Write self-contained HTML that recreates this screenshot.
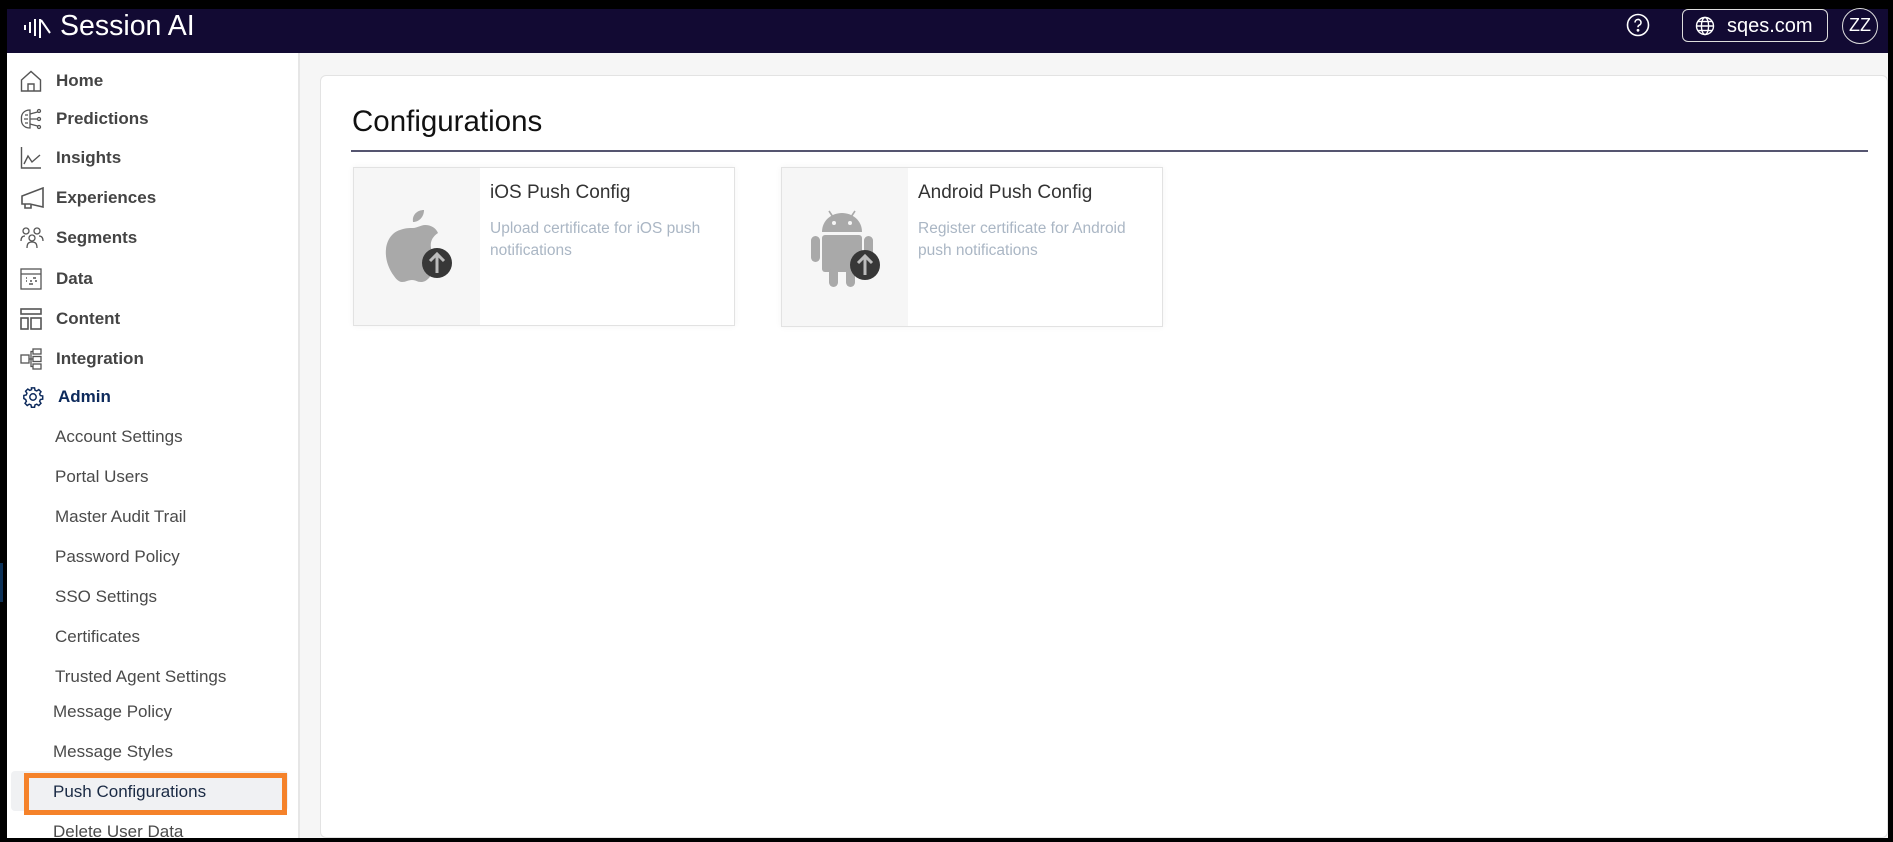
<!DOCTYPE html>
<html><head><meta charset="utf-8"><style>
*{margin:0;padding:0;box-sizing:border-box}
body{width:1893px;height:842px;overflow:hidden;background:#000;font-family:"Liberation Sans",Arial,sans-serif;position:relative}
.abs{position:absolute}
#hdr{left:7px;top:9px;width:1881px;height:44px;background:#120a33}
#side{left:7px;top:53px;width:293px;height:785px;background:#fff;border-right:2px solid #e6e6e6}
#main{left:300px;top:53px;width:1588px;height:785px;background:#f6f6f6}
#card{left:320px;top:75px;width:1568px;height:763px;background:#fff;border:1px solid #e3e3e3;border-radius:6px}
.nav{position:absolute;left:56px;font-size:17px;font-weight:bold;color:#444;line-height:20px}
.ico{position:absolute;left:20px}
.sub{position:absolute;left:55px;font-size:17px;color:#4a4a4a;line-height:20px}
.cfg{position:absolute;background:#fff;border:1px solid #e2e2e2;box-shadow:0 0 6px rgba(0,0,0,.05)}
.cfg .g{position:absolute;left:0;top:0;bottom:0;width:126px;background:#f6f6f6}
.cfg h3{position:absolute;left:136px;top:14px;font-size:19px;font-weight:normal;color:#333}
.cfg p{position:absolute;left:136px;top:50px;width:230px;font-size:15.5px;line-height:22px;color:#aab6c4}
</style></head><body>
<div id="hdr" class="abs"></div>
<svg class="abs" style="left:22px;top:16px" width="32" height="24" viewBox="0 0 32 24" fill="none" stroke="#fff" stroke-width="2"><line x1="3" y1="9" x2="3" y2="14"/><line x1="8" y1="6" x2="8" y2="17"/><line x1="13" y1="3" x2="13" y2="20"/><line x1="18" y1="3" x2="18" y2="22"/><path d="M19 4 L28 17"/></svg>
<div class="abs" style="left:60px;top:9px;font-size:28.5px;color:#fff;line-height:34px">Session AI</div>
<svg class="abs" style="left:1626px;top:13px" width="24" height="24" viewBox="0 0 24 24" fill="none" stroke="#fff" stroke-width="1.6"><circle cx="12" cy="12" r="10.5"/><path d="M9 9.5a3 3 0 1 1 4 2.8c-.8.4-1 1-1 2"/><circle cx="12" cy="17.3" r=".6" fill="#fff"/></svg>
<div class="abs" style="left:1682px;top:9px;width:146px;height:33px;border:1.5px solid #ddd;border-radius:6px"></div>
<svg class="abs" style="left:1695px;top:16px" width="20" height="20" viewBox="0 0 20 20" fill="none" stroke="#fff" stroke-width="1.4"><circle cx="10" cy="10" r="8.5"/><ellipse cx="10" cy="10" rx="3.6" ry="8.5"/><line x1="1.5" y1="10" x2="18.5" y2="10"/><line x1="3" y1="5.5" x2="17" y2="5.5"/><line x1="3" y1="14.5" x2="17" y2="14.5"/></svg>
<div class="abs" style="left:1727px;top:14px;font-size:20px;color:#fff;line-height:24px">sqes.com</div>
<div class="abs" style="left:1842px;top:8px;width:36px;height:36px;border:1.5px solid #ddd;border-radius:50%;color:#fff;font-size:18px;text-align:center;line-height:33px">ZZ</div>

<div id="side" class="abs"></div>
<div class="abs" style="left:0;top:563px;width:3px;height:39px;background:#0c3158"></div>
<div id="main" class="abs"></div>
<div id="card" class="abs"></div>

<svg class="ico" style="top:70px" width="22" height="22" viewBox="0 0 22 22" fill="none" stroke="#555" stroke-width="1.4"><path d="M1.5 10 L11 1.5 L20.5 10 V21 H1.5Z"/><path d="M8 21 V14 H14 V21"/></svg>
<div class="nav" style="top:71px">Home</div>
<svg class="ico" style="top:108px" width="22" height="22" viewBox="0 0 22 22" fill="none" stroke="#555" stroke-width="1.3"><path d="M10 2 C4 2 1 6 1.5 11 C1 16 4 20 10 20 Z"/><path d="M5 7 h3 M4 11 h4 M5 15 h3"/><circle cx="19" cy="3" r="1.5"/><circle cx="19" cy="11" r="1.5"/><circle cx="19" cy="19" r="1.5"/><path d="M10 6 L17.5 4 M10 11 H17.5 M10 16 L17.5 18"/></svg>
<div class="nav" style="top:109px">Predictions</div>
<svg class="ico" style="top:147px" width="22" height="22" viewBox="0 0 22 22" fill="none" stroke="#555" stroke-width="1.4"><path d="M1.5 0 V21 H21"/><path d="M4 17 L8 9 L12 15 L20 8"/></svg>
<div class="nav" style="top:148px">Insights</div>
<svg class="ico" style="top:187px" width="24" height="22" viewBox="0 0 24 22" fill="none" stroke="#555" stroke-width="1.6"><path d="M23 1 V20 L10 17 H2 V9 Z"/><path d="M5 17 V21 H11 V18"/></svg>
<div class="nav" style="top:188px">Experiences</div>
<svg class="ico" style="top:227px" width="24" height="22" viewBox="0 0 24 22" fill="none" stroke="#555" stroke-width="1.3"><circle cx="6" cy="4" r="3"/><circle cx="17" cy="4" r="3"/><circle cx="12" cy="11" r="3"/><path d="M1 14 C1 10 3 9 5 9 M23 14 C23 10 21 9 19 9 M7 21 C7 16 9 15 12 15 C15 15 17 16 17 21"/></svg>
<div class="nav" style="top:228px">Segments</div>
<svg class="ico" style="top:268px" width="22" height="22" viewBox="0 0 22 22" fill="none" stroke="#555" stroke-width="1.3"><rect x="1" y="1" width="20" height="20"/><line x1="1" y1="6" x2="21" y2="6"/><path d="M6 10h1M6 13h1M10 13h2M9 16h4M13 10h3M15 13h2" stroke-width="1.6"/></svg>
<div class="nav" style="top:269px">Data</div>
<svg class="ico" style="top:308px" width="22" height="22" viewBox="0 0 22 22" fill="none" stroke="#555" stroke-width="1.6"><rect x="1" y="1" width="20" height="5"/><rect x="1" y="10" width="7" height="11"/><rect x="11" y="10" width="10" height="11"/></svg>
<div class="nav" style="top:309px">Content</div>
<svg class="ico" style="top:348px" width="22" height="22" viewBox="0 0 22 22" fill="none" stroke="#555" stroke-width="1.3"><rect x="1" y="7" width="8" height="8"/><rect x="13" y="1" width="8" height="5"/><rect x="13" y="8.5" width="8" height="5"/><rect x="13" y="16" width="8" height="5"/><path d="M9 11 H11 V3.5 H13 M11 11 H13 M11 11 V18.5 H13"/></svg>
<div class="nav" style="top:349px">Integration</div>
<svg class="ico" style="top:386px;left:22px" width="22" height="22" viewBox="0 0 24 24" fill="none" stroke="#0d2a5c" stroke-width="1.6"><circle cx="12" cy="12" r="3.5"/><path d="M10.3 2h3.4l.5 2.6 1.9.8 2.2-1.5 2.4 2.4-1.5 2.2.8 1.9 2.6.5v3.4l-2.6.5-.8 1.9 1.5 2.2-2.4 2.4-2.2-1.5-1.9.8-.5 2.6h-3.4l-.5-2.6-1.9-.8-2.2 1.5-2.4-2.4 1.5-2.2-.8-1.9L2 13.7v-3.4l2.6-.5.8-1.9-1.5-2.2 2.4-2.4 2.2 1.5 1.9-.8z"/></svg>
<div class="nav" style="top:387px;left:58px;color:#0d2a5c">Admin</div>

<div class="sub" style="top:427px">Account Settings</div>
<div class="sub" style="top:467px">Portal Users</div>
<div class="sub" style="top:507px">Master Audit Trail</div>
<div class="sub" style="top:547px">Password Policy</div>
<div class="sub" style="top:587px">SSO Settings</div>
<div class="sub" style="top:627px">Certificates</div>
<div class="sub" style="top:667px">Trusted Agent Settings</div>
<div class="sub" style="top:702px;left:53px">Message Policy</div>
<div class="sub" style="top:742px;left:53px">Message Styles</div>
<div class="abs" style="left:11px;top:771px;width:277px;height:40px;background:#f0f1f3;border-radius:4px"></div>
<div class="abs" style="left:24px;top:773px;width:263px;height:42px;border:5px solid #f5822a"></div>
<div class="sub" style="top:782px;left:53px;color:#1a2a44">Push Configurations</div>
<div class="sub" style="top:822px;left:53px">Delete User Data</div>
<div class="abs" style="left:0;top:838px;width:1893px;height:4px;background:#000"></div>

<div class="abs" style="left:352px;top:105px;font-size:29.5px;color:#111;line-height:34px">Configurations</div>
<div class="abs" style="left:351px;top:150px;width:1517px;height:1.5px;background:#555570"></div>

<div class="cfg" style="left:353px;top:167px;width:382px;height:159px">
<div class="g"></div>
<svg class="abs" style="left:30px;top:38px" width="72" height="80" viewBox="0 0 72 80"><path fill="#a9a9a9" d="M40 4 C40 11 35 16 29 16 C28 9 33 4 40 4Z M29 22 C33 22 37 19 41 19 C47 19 52 22 54 27 C48 31 46 36 47 42 C48 48 51 52 55 54 C53 60 49 67 45 72 C42 75 40 76 37 76 C33 76 32 74 28 74 C24 74 22 76 18 76 C15 76 12 73 10 70 C4 62 1 52 2 43 C3 33 9 26 16 24 C21 22 25 22 29 22Z"/><circle cx="53" cy="57" r="15" fill="#373737"/><path d="M53 67 V48 M46 55 L53 48 L60 55" stroke="#bbb" stroke-width="3" fill="none"/></svg>
<h3>iOS Push Config</h3>
<p>Upload certificate for iOS push notifications</p>
</div>

<div class="cfg" style="left:781px;top:167px;width:382px;height:160px">
<div class="g"></div>
<svg class="abs" style="left:28px;top:42px" width="72" height="80" viewBox="0 0 72 80"><g fill="#a9a9a9"><path d="M12 22 C12 10 22 3 32 3 C42 3 52 10 52 22Z"/><rect x="12" y="25" width="40" height="37" rx="3"/><rect x="1" y="26" width="9" height="26" rx="4.5"/><rect x="54" y="26" width="9" height="26" rx="4.5"/><rect x="19" y="58" width="9" height="19" rx="4.5"/><rect x="36" y="58" width="9" height="19" rx="4.5"/></g><path d="M19 1 L23 7 M45 1 L41 7" stroke="#a9a9a9" stroke-width="1.6"/><circle cx="24" cy="13" r="2" fill="#f6f6f6"/><circle cx="40" cy="13" r="2" fill="#f6f6f6"/><circle cx="55" cy="55" r="15" fill="#373737"/><path d="M55 65 V46 M48 53 L55 46 L62 53" stroke="#bbb" stroke-width="3" fill="none"/></svg>
<h3>Android Push Config</h3>
<p>Register certificate for Android push notifications</p>
</div>
</body></html>
